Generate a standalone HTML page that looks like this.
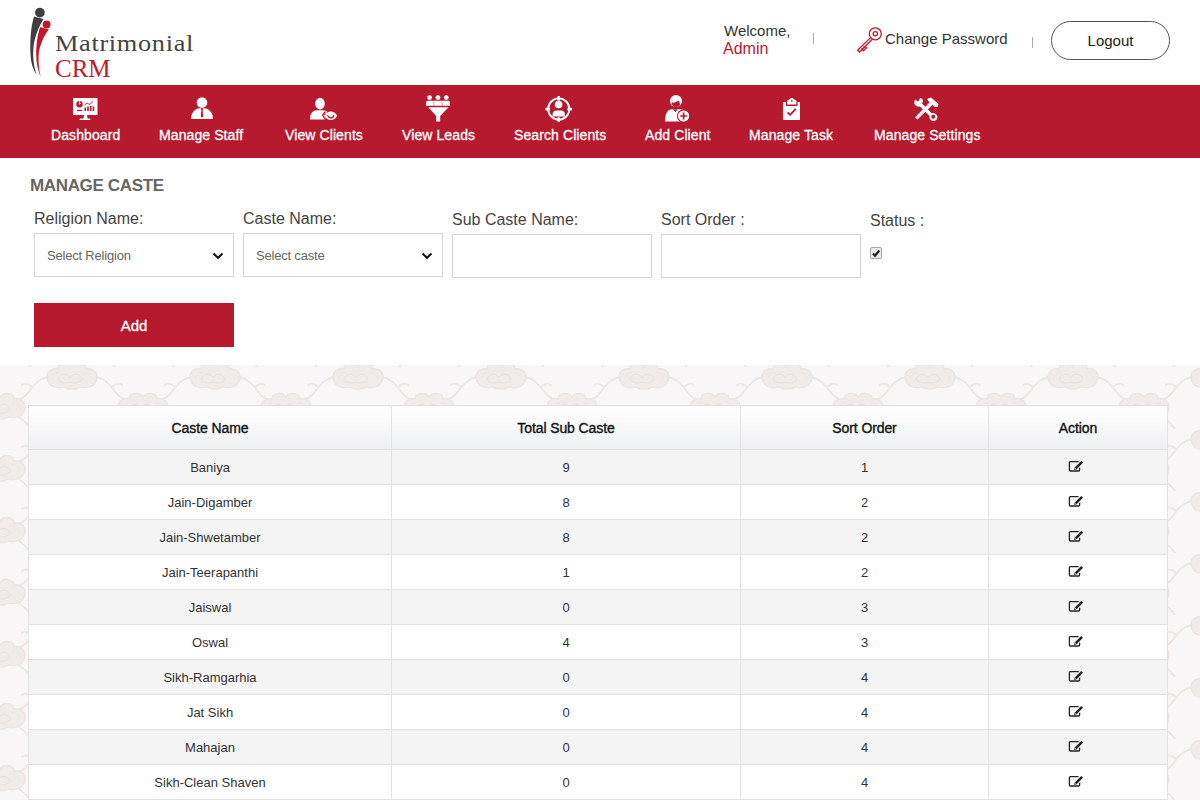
<!DOCTYPE html>
<html><head><meta charset="utf-8">
<style>
*{box-sizing:border-box;margin:0;padding:0}
html,body{width:1200px;height:800px;overflow:hidden;background:#fff;font-family:"Liberation Sans",sans-serif;color:#333}
.abs{position:absolute}
#hdr{position:absolute;left:0;top:0;width:1200px;height:85px;background:#fff}
#nav{position:absolute;left:0;top:85px;width:1200px;height:73px;background:#b71a2e}
.ni{position:absolute;top:0;height:73px;color:#fff;font-size:14px;white-space:nowrap;-webkit-text-stroke:0.3px #fff;letter-spacing:0.1px}
.ni span{position:absolute;top:42px;left:0}
.ni svg{position:absolute}
#form{position:absolute;left:0;top:158px;width:1200px;height:207px;background:#fff}
.lbl{position:absolute;font-size:16px;color:#444;white-space:nowrap}
.box{position:absolute;border:1px solid #d6d6d6;background:#fff}
.sel{position:absolute;left:12px;top:14px;font-size:13px;color:#666;white-space:nowrap;letter-spacing:-0.2px}
.chev{position:absolute;left:177px;top:18px}
#bg{position:absolute;left:0;top:365px;width:1200px;height:435px;background:#f8f6f7;overflow:hidden}
table{position:absolute;left:28px;top:405px;width:1140px;border-collapse:collapse;background:#fff}
td,th{border:1px solid #e3e3e3;text-align:center;font-size:13px;color:#333;height:35px;padding:0}
th{height:44px;font-size:14px;font-weight:normal;color:#111;-webkit-text-stroke:0.35px #111;letter-spacing:-0.1px;background:linear-gradient(#fff,#eff0f2)}
tr.o td{background:#f4f4f4}
td.ed svg{margin-left:79px !important}
</style></head>
<body>
<div id="hdr">
  <svg class="abs" style="left:0;top:0" width="60" height="85" viewBox="0 0 60 85">
    <circle cx="39.9" cy="12.6" r="4.9" fill="#404044"/>
    <path d="M34,16.5 L43.5,19 C37,30 33.5,40 33.2,52 C33,62 35,70 36.8,75 C32,68 30.3,60 30.3,48 C30.3,35 31.5,25 34,16.5 Z" fill="#404044"/>
    <circle cx="46.6" cy="24.5" r="3.9" fill="#c0182c"/>
    <path d="M40.25,27 L48.75,29.5 C44,36 39,46 38.6,56 C38.4,64 39,71 40.8,77 C38,71 36.3,63 36.2,55 C36.2,45 37.5,34 40.25,27 Z" fill="#c0182c"/>
  </svg>
  <div class="abs" style="left:55px;top:30px;font-family:'Liberation Serif',serif;font-size:23.5px;line-height:27px;color:#444;white-space:nowrap;transform-origin:0 0;transform:scaleX(1.12);letter-spacing:0.6px">Matrimonial</div>
  <div class="abs" style="left:55px;top:55px;font-family:'Liberation Serif',serif;font-size:25px;line-height:27px;color:#c0182c;white-space:nowrap;transform-origin:0 0;transform:scaleX(1.0)">CRM</div>

  <div class="abs" style="left:724px;top:22px;font-size:15px;color:#333;white-space:nowrap">Welcome,</div>
  <div class="abs" style="left:723px;top:40px;font-size:16px;color:#b71a2e;white-space:nowrap">Admin</div>
  <div class="abs" style="left:813px;top:33px;width:1px;height:11px;background:#aaa"></div>
  
  <div class="abs" style="left:885px;top:30px;font-size:15px;color:#333;white-space:nowrap">Change Password</div>
  <div class="abs" style="left:1032px;top:37px;width:1px;height:11px;background:#aaa"></div>
  <div class="abs" style="left:1051px;top:21px;width:119px;height:39px;border:1px solid #555;border-radius:20px;font-size:15px;color:#222;text-align:center;line-height:37px">Logout</div>
</div>

<div id="nav">
  <div class="ni" style="left:51px"><span>Dashboard</span></div>
  <div class="ni" style="left:159px"><span>Manage Staff</span></div>
  <div class="ni" style="left:285px"><span>View Clients</span></div>
  <div class="ni" style="left:402px"><span>View Leads</span></div>
  <div class="ni" style="left:514px"><span>Search Clients</span></div>
  <div class="ni" style="left:645px"><span>Add Client</span></div>
  <div class="ni" style="left:749px"><span>Manage Task</span></div>
  <div class="ni" style="left:874px"><span>Manage Settings</span></div>
</div>


<svg class="abs" style="left:0;top:0" width="1200" height="160" viewBox="0 0 1200 160">
 <g fill="#fff">
  <!-- dashboard -->
  <rect x="73" y="98" width="24.5" height="17"/>
  <path d="M84,115 L87,115 L87.5,118.5 L90,118.5 L90.5,120 L79.5,120 L80,118.5 L83.5,118.5 Z"/>
  <!-- staff -->
  <circle cx="202" cy="102.5" r="5.3"/>
  <path d="M191,119 C191,112.5 195.5,108.3 199.5,108.3 L204.5,108.3 C208.5,108.3 213,112.5 213,119 Z"/>
  <!-- view clients -->
  <ellipse cx="320" cy="103.6" rx="4.8" ry="5.8"/>
  <path d="M310,119.5 C309.8,113.5 313,110.3 317,110.3 L323,110.3 C325,110.3 326.5,111 327.5,112 L323.5,114.5 L326,119.5 Z"/>
  <path d="M324,115.8 C326,112.8 328.5,111.5 330.8,111.5 C333.2,111.5 335.5,112.8 337.3,115.8 C335.5,118.8 333.2,120 330.8,120 C328.5,120 326,118.8 324,115.8 Z"/>
  <!-- leads -->
  <circle cx="429.6" cy="97.6" r="2.4"/><circle cx="438" cy="97.6" r="2.4"/><circle cx="446.3" cy="97.6" r="2.4"/>
  <path d="M426,105.8 L426,102.5 C426,101.3 427,100.7 428,100.7 L448,100.7 C449,100.7 450,101.3 450,102.5 L450,105.8 Z"/><path d="M433.8,102 L433.8,105.8 M442.2,102 L442.2,105.8" stroke="#d8737f" stroke-width="0.8"/>
  <path d="M428.3,107.3 L448.5,107.3 L440.2,116 L440.2,121.5 L436.2,121.5 L436.2,116 Z"/>
  <!-- search clients -->
  <circle cx="558.6" cy="104.5" r="3.8"/>
  <path d="M552.6,116.6 L552.6,114 C552.6,111.8 554.3,110.5 556.3,110.5 L561,110.5 C563,110.5 564.8,111.8 564.8,114 L564.8,116.6 Z"/>
  <rect x="557.4" y="96" width="2.6" height="4.8" rx="1"/>
  <rect x="557.4" y="117.3" width="2.6" height="4.8" rx="1"/>
  <rect x="545.3" y="107.8" width="4.8" height="2.6" rx="1"/>
  <rect x="567.3" y="107.8" width="4.8" height="2.6" rx="1"/>
  <!-- add client -->
  <circle cx="676" cy="101" r="6"/>
  <path d="M665,121.5 C665,113 668,109.3 672,109.3 L680.5,109.3 C683,109.3 684.5,110.5 685.5,112 L680,121.5 Z"/>
  <!-- task -->
  <rect x="783" y="102" width="17" height="18" rx="0.8"/>

  <!-- settings -->
  <path d="M927,99 L931,97.5 L938.5,104 L937.5,107 L934.5,106.8 L932.5,104.8 L917.5,119.5 L915,117.5 L929.5,102.5 Z"/>
  <path d="M915.5,99.5 L917.5,101.5 L919.2,100.2 L920,98 L922.5,99 L923,101.5 L922,103.5 L931.5,113 C933.5,112.5 936.5,113.5 937.3,116 C938,119 935.5,121 933.5,121 C931,121 929,118.7 929.5,116 L920,106.5 C917.5,107 915.5,106 914.5,104 C914,102.5 914.3,100.8 915.5,99.5 Z"/>
 </g>
 <g fill="#b71a2e" stroke="none">
  <!-- dashboard inner -->
  <circle cx="79.5" cy="104.3" r="3.2"/>
  <rect x="77" y="109.8" width="5" height="1.3"/>
  <rect x="84.5" y="107.5" width="1.6" height="3.6"/><rect x="87.2" y="106.5" width="1.6" height="4.6"/><rect x="89.9" y="106" width="1.6" height="5.1"/><rect x="92.6" y="106.5" width="1.6" height="4.6"/>
  <!-- staff tie -->
  <path d="M201,108.3 L203,108.3 L203.2,109.5 L202.6,110 L203.3,116.5 L202,117.6 L200.7,116.5 L201.4,110 L200.8,109.5 Z"/>
  <!-- add client face -->
  <path d="M671.8,102.3 C673.5,103.2 676.5,102.3 678.3,100.6 C679.3,101.8 679.9,103 680,104.2 C679.8,105.9 678,107 676,107 C673.8,107 672,105.8 671.8,103.8 Z"/>
  <path d="M672.5,109.3 L677.8,109.3 L675.5,112 Z"/>
  <!-- task dot -->
  <circle cx="791.6" cy="100.7" r="0.9"/>
  <!-- settings wrench ring hole -->
  <circle cx="933.3" cy="116.8" r="2"/>
 </g>
 <g fill="none" stroke="#b71a2e">
  <path d="M81,103 L79.5,104.3 L79.5,101" stroke-width="0.8" stroke="#fff"/>
  <path d="M84.5,105 L87,103 L89.5,104.5 L93,101.5" stroke-width="0.9"/>
  <path d="M325.5,111.5 L322.5,115 L326,120.5" stroke-width="1.2"/>
  <path d="M327.5,115.2 C328.5,117.3 329.8,118 330.8,118 C331.8,118 333.2,117.3 334,115.2" stroke-width="1.3"/>
  
  <path d="M917.5,118 L924,111.5" stroke-width="0.6" stroke-dasharray="1 1"/>
 </g>
 <circle cx="558.75" cy="109" r="10.6" fill="none" stroke="#fff" stroke-width="1.9"/>
 <path d="M786,106 L786,100.6 C786,99.4 787,99 788.4,98.8 C789.4,97.4 790.6,96.8 791.8,96.8 C793,96.8 794.2,97.4 795.2,98.8 C796.6,99 797.6,99.4 797.6,100.6 L797.6,106 Z" fill="#b71a2e"/>
 <path d="M787.2,104.4 L787.2,101 C787.2,100.2 788,100 789,99.8 C790,98.6 790.9,98 791.8,98 C792.7,98 793.6,98.6 794.6,99.8 C795.6,100 796.4,100.2 796.4,101 L796.4,104.4 Z" fill="#fff"/>
 <circle cx="791.8" cy="100.8" r="0.9" fill="#b71a2e"/>
 <path d="M787.6,112.3 L790.2,114.8 L795.8,108.8" stroke="#b71a2e" stroke-width="1.8" fill="none"/>
 <circle cx="683.6" cy="116" r="6.7" fill="#b71a2e"/>
 <circle cx="683.6" cy="116" r="5.6" fill="#fff"/>
 <path d="M680.2,116 L687,116 M683.6,112.6 L683.6,119.4" stroke="#b71a2e" stroke-width="1.7" fill="none"/>
 <!-- key -->
 <g fill="none" stroke="#c0182c" stroke-width="1.3">
  <circle cx="875.3" cy="33.8" r="6"/>
  <circle cx="875.3" cy="33.8" r="2.1"/>
  <path d="M870.6,37.6 L857.6,50.3 L859.6,52 L872.3,39.3"/>
  <path d="M861.3,48.5 L863.6,50.8 L865,49.3 M863.6,46.3 L865.8,48.6 L867.2,47.2"/>
 </g>
</svg>

<div id="form">
  <div class="abs" style="left:30px;top:18px;font-size:17px;font-weight:bold;color:#666;white-space:nowrap;letter-spacing:-0.35px">MANAGE CASTE</div>
  <div class="lbl" style="left:34px;top:52px">Religion Name:</div>
  <div class="lbl" style="left:243px;top:52px">Caste Name:</div>
  <div class="lbl" style="left:452px;top:53px">Sub Caste Name:</div>
  <div class="lbl" style="left:661px;top:53px">Sort Order :</div>
  <div class="lbl" style="left:870px;top:54px">Status :</div>
  <div class="box" style="left:34px;top:75px;width:200px;height:44px"><span class="sel">Select Religion</span><svg class="chev" width="12" height="8" viewBox="0 0 12 8"><path d="M1.5,1.5 L6,5.8 L10.5,1.5" fill="none" stroke="#111" stroke-width="2"/></svg></div>
  <div class="box" style="left:243px;top:75px;width:200px;height:44px"><span class="sel">Select caste</span><svg class="chev" width="12" height="8" viewBox="0 0 12 8"><path d="M1.5,1.5 L6,5.8 L10.5,1.5" fill="none" stroke="#111" stroke-width="2"/></svg></div>
  <div class="box" style="left:452px;top:76px;width:200px;height:44px"></div>
  <div class="box" style="left:661px;top:76px;width:200px;height:44px"></div>
  <div class="abs" style="left:870px;top:89px;width:12px;height:12px;border:1px solid #aaa;border-radius:2px;background:#e9e9e9"></div>
  <svg class="abs" style="left:870px;top:89px" width="12" height="12" viewBox="0 0 12 12"><path d="M3,6.5 L5,8.8 L9.3,3.5" fill="none" stroke="#222" stroke-width="2.2"/></svg>
  <div class="abs" style="left:34px;top:145px;width:200px;height:44px;background:#b71a2e;color:#fff;font-size:15px;text-align:center;line-height:46px;-webkit-text-stroke:0.3px #fff">Add</div>
</div>

<div id="bg"><svg width="1200" height="435" style="display:block">
 <defs><pattern id="dm" x="0" y="2" width="143" height="62" patternUnits="userSpaceOnUse">
  <g fill="none" stroke="#eee8e5" stroke-width="1.8" stroke-linecap="round">
   <path d="M96,10 C108,12 112,22 118,28 C124,34 130,34 140,30"/>
   <path d="M48,10 C36,12 32,22 26,28 C20,34 14,34 4,30"/>
   <path d="M96,74 C108,72 112,62 118,56 C124,50 130,48 140,32"/>
   <path d="M48,74 C36,72 32,62 26,56 C20,50 14,48 4,32"/>
   <path d="M112,20 C116,16 120,16 122,18 M32,20 C28,16 24,16 22,18"/>
  </g>
  <g transform="translate(72,10)">
   <path d="M-24,4 C-28,-4 -20,-10 -14,-8 C-14,-14 -4,-16 0,-10 C4,-16 14,-14 14,-8 C20,-10 28,-4 24,4 C22,10 14,12 8,10 C4,13 -4,13 -8,10 C-14,12 -22,10 -24,4 Z" fill="#f1ebe9" stroke="#ebe4e1" stroke-width="1.2"/>
   <path d="M-14,2 C-12,-4 -4,-4 -2,1 C0,-4 8,-4 10,2 C8,6 2,7 -2,5 C-6,7 -12,6 -14,2 Z" fill="none" stroke="#e9e2df" stroke-width="1"/>
   <path d="M-20,2 C-18,-3 -16,-5 -12,-4 M12,-4 C16,-5 18,-3 20,2" fill="none" stroke="#ebe4e1" stroke-width="0.8"/>
  </g><g transform="translate(72,72)">
   <path d="M-24,4 C-28,-4 -20,-10 -14,-8 C-14,-14 -4,-16 0,-10 C4,-16 14,-14 14,-8 C20,-10 28,-4 24,4 C22,10 14,12 8,10 C4,13 -4,13 -8,10 C-14,12 -22,10 -24,4 Z" fill="#f1ebe9" stroke="#ebe4e1" stroke-width="1.2"/>
   <path d="M-14,2 C-12,-4 -4,-4 -2,1 C0,-4 8,-4 10,2 C8,6 2,7 -2,5 C-6,7 -12,6 -14,2 Z" fill="none" stroke="#e9e2df" stroke-width="1"/>
   <path d="M-20,2 C-18,-3 -16,-5 -12,-4 M12,-4 C16,-5 18,-3 20,2" fill="none" stroke="#ebe4e1" stroke-width="0.8"/>
  </g><g transform="translate(0,40)">
   <path d="M-24,4 C-28,-4 -20,-10 -14,-8 C-14,-14 -4,-16 0,-10 C4,-16 14,-14 14,-8 C20,-10 28,-4 24,4 C22,10 14,12 8,10 C4,13 -4,13 -8,10 C-14,12 -22,10 -24,4 Z" fill="#f1ebe9" stroke="#ebe4e1" stroke-width="1.2"/>
   <path d="M-14,2 C-12,-4 -4,-4 -2,1 C0,-4 8,-4 10,2 C8,6 2,7 -2,5 C-6,7 -12,6 -14,2 Z" fill="none" stroke="#e9e2df" stroke-width="1"/>
   <path d="M-20,2 C-18,-3 -16,-5 -12,-4 M12,-4 C16,-5 18,-3 20,2" fill="none" stroke="#ebe4e1" stroke-width="0.8"/>
  </g><g transform="translate(143,40)">
   <path d="M-24,4 C-28,-4 -20,-10 -14,-8 C-14,-14 -4,-16 0,-10 C4,-16 14,-14 14,-8 C20,-10 28,-4 24,4 C22,10 14,12 8,10 C4,13 -4,13 -8,10 C-14,12 -22,10 -24,4 Z" fill="#f1ebe9" stroke="#ebe4e1" stroke-width="1.2"/>
   <path d="M-14,2 C-12,-4 -4,-4 -2,1 C0,-4 8,-4 10,2 C8,6 2,7 -2,5 C-6,7 -12,6 -14,2 Z" fill="none" stroke="#e9e2df" stroke-width="1"/>
   <path d="M-20,2 C-18,-3 -16,-5 -12,-4 M12,-4 C16,-5 18,-3 20,2" fill="none" stroke="#ebe4e1" stroke-width="0.8"/>
  </g><g transform="translate(72,-52)">
   <path d="M-24,4 C-28,-4 -20,-10 -14,-8 C-14,-14 -4,-16 0,-10 C4,-16 14,-14 14,-8 C20,-10 28,-4 24,4 C22,10 14,12 8,10 C4,13 -4,13 -8,10 C-14,12 -22,10 -24,4 Z" fill="#f1ebe9" stroke="#ebe4e1" stroke-width="1.2"/>
   <path d="M-14,2 C-12,-4 -4,-4 -2,1 C0,-4 8,-4 10,2 C8,6 2,7 -2,5 C-6,7 -12,6 -14,2 Z" fill="none" stroke="#e9e2df" stroke-width="1"/>
   <path d="M-20,2 C-18,-3 -16,-5 -12,-4 M12,-4 C16,-5 18,-3 20,2" fill="none" stroke="#ebe4e1" stroke-width="0.8"/>
  </g>
 </pattern></defs>
 <rect width="1200" height="435" fill="#f8f6f7"/>
 <rect width="1200" height="435" fill="url(#dm)"/>
</svg></div>
<table>
<tr><th style="width:363px">Caste Name</th><th style="width:349px">Total Sub Caste</th><th style="width:248px">Sort Order</th><th>Action</th></tr>
<tr class="o"><td>Baniya</td><td>9</td><td>1</td><td class="ed"><svg width="16" height="14" viewBox="0 1 16 14" style="display:block"><path d="M10.6,2.6 L2.4,2.6 C1.7,2.6 1.4,3 1.4,3.7 L1.4,11 C1.4,11.7 1.7,12 2.4,12 L10.6,12 C11.3,12 11.6,11.7 11.6,11 L11.6,8.8" fill="none" stroke="#222" stroke-width="1.3"/><path d="M6,11 L6.8,8.4 L13.2,2 L15,3.8 L8.6,10.2 Z" fill="#222"/><path d="M7,8.9 L8.2,10" stroke="#fff" stroke-width="0.6"/></svg></td></tr>
<tr><td>Jain-Digamber</td><td>8</td><td>2</td><td class="ed"><svg width="16" height="14" viewBox="0 1 16 14" style="display:block"><path d="M10.6,2.6 L2.4,2.6 C1.7,2.6 1.4,3 1.4,3.7 L1.4,11 C1.4,11.7 1.7,12 2.4,12 L10.6,12 C11.3,12 11.6,11.7 11.6,11 L11.6,8.8" fill="none" stroke="#222" stroke-width="1.3"/><path d="M6,11 L6.8,8.4 L13.2,2 L15,3.8 L8.6,10.2 Z" fill="#222"/><path d="M7,8.9 L8.2,10" stroke="#fff" stroke-width="0.6"/></svg></td></tr>
<tr class="o"><td>Jain-Shwetamber</td><td>8</td><td>2</td><td class="ed"><svg width="16" height="14" viewBox="0 1 16 14" style="display:block"><path d="M10.6,2.6 L2.4,2.6 C1.7,2.6 1.4,3 1.4,3.7 L1.4,11 C1.4,11.7 1.7,12 2.4,12 L10.6,12 C11.3,12 11.6,11.7 11.6,11 L11.6,8.8" fill="none" stroke="#222" stroke-width="1.3"/><path d="M6,11 L6.8,8.4 L13.2,2 L15,3.8 L8.6,10.2 Z" fill="#222"/><path d="M7,8.9 L8.2,10" stroke="#fff" stroke-width="0.6"/></svg></td></tr>
<tr><td>Jain-Teerapanthi</td><td>1</td><td>2</td><td class="ed"><svg width="16" height="14" viewBox="0 1 16 14" style="display:block"><path d="M10.6,2.6 L2.4,2.6 C1.7,2.6 1.4,3 1.4,3.7 L1.4,11 C1.4,11.7 1.7,12 2.4,12 L10.6,12 C11.3,12 11.6,11.7 11.6,11 L11.6,8.8" fill="none" stroke="#222" stroke-width="1.3"/><path d="M6,11 L6.8,8.4 L13.2,2 L15,3.8 L8.6,10.2 Z" fill="#222"/><path d="M7,8.9 L8.2,10" stroke="#fff" stroke-width="0.6"/></svg></td></tr>
<tr class="o"><td>Jaiswal</td><td>0</td><td>3</td><td class="ed"><svg width="16" height="14" viewBox="0 1 16 14" style="display:block"><path d="M10.6,2.6 L2.4,2.6 C1.7,2.6 1.4,3 1.4,3.7 L1.4,11 C1.4,11.7 1.7,12 2.4,12 L10.6,12 C11.3,12 11.6,11.7 11.6,11 L11.6,8.8" fill="none" stroke="#222" stroke-width="1.3"/><path d="M6,11 L6.8,8.4 L13.2,2 L15,3.8 L8.6,10.2 Z" fill="#222"/><path d="M7,8.9 L8.2,10" stroke="#fff" stroke-width="0.6"/></svg></td></tr>
<tr><td>Oswal</td><td>4</td><td>3</td><td class="ed"><svg width="16" height="14" viewBox="0 1 16 14" style="display:block"><path d="M10.6,2.6 L2.4,2.6 C1.7,2.6 1.4,3 1.4,3.7 L1.4,11 C1.4,11.7 1.7,12 2.4,12 L10.6,12 C11.3,12 11.6,11.7 11.6,11 L11.6,8.8" fill="none" stroke="#222" stroke-width="1.3"/><path d="M6,11 L6.8,8.4 L13.2,2 L15,3.8 L8.6,10.2 Z" fill="#222"/><path d="M7,8.9 L8.2,10" stroke="#fff" stroke-width="0.6"/></svg></td></tr>
<tr class="o"><td>Sikh-Ramgarhia</td><td>0</td><td>4</td><td class="ed"><svg width="16" height="14" viewBox="0 1 16 14" style="display:block"><path d="M10.6,2.6 L2.4,2.6 C1.7,2.6 1.4,3 1.4,3.7 L1.4,11 C1.4,11.7 1.7,12 2.4,12 L10.6,12 C11.3,12 11.6,11.7 11.6,11 L11.6,8.8" fill="none" stroke="#222" stroke-width="1.3"/><path d="M6,11 L6.8,8.4 L13.2,2 L15,3.8 L8.6,10.2 Z" fill="#222"/><path d="M7,8.9 L8.2,10" stroke="#fff" stroke-width="0.6"/></svg></td></tr>
<tr><td>Jat Sikh</td><td>0</td><td>4</td><td class="ed"><svg width="16" height="14" viewBox="0 1 16 14" style="display:block"><path d="M10.6,2.6 L2.4,2.6 C1.7,2.6 1.4,3 1.4,3.7 L1.4,11 C1.4,11.7 1.7,12 2.4,12 L10.6,12 C11.3,12 11.6,11.7 11.6,11 L11.6,8.8" fill="none" stroke="#222" stroke-width="1.3"/><path d="M6,11 L6.8,8.4 L13.2,2 L15,3.8 L8.6,10.2 Z" fill="#222"/><path d="M7,8.9 L8.2,10" stroke="#fff" stroke-width="0.6"/></svg></td></tr>
<tr class="o"><td>Mahajan</td><td>0</td><td>4</td><td class="ed"><svg width="16" height="14" viewBox="0 1 16 14" style="display:block"><path d="M10.6,2.6 L2.4,2.6 C1.7,2.6 1.4,3 1.4,3.7 L1.4,11 C1.4,11.7 1.7,12 2.4,12 L10.6,12 C11.3,12 11.6,11.7 11.6,11 L11.6,8.8" fill="none" stroke="#222" stroke-width="1.3"/><path d="M6,11 L6.8,8.4 L13.2,2 L15,3.8 L8.6,10.2 Z" fill="#222"/><path d="M7,8.9 L8.2,10" stroke="#fff" stroke-width="0.6"/></svg></td></tr>
<tr><td>Sikh-Clean Shaven</td><td>0</td><td>4</td><td class="ed"><svg width="16" height="14" viewBox="0 1 16 14" style="display:block"><path d="M10.6,2.6 L2.4,2.6 C1.7,2.6 1.4,3 1.4,3.7 L1.4,11 C1.4,11.7 1.7,12 2.4,12 L10.6,12 C11.3,12 11.6,11.7 11.6,11 L11.6,8.8" fill="none" stroke="#222" stroke-width="1.3"/><path d="M6,11 L6.8,8.4 L13.2,2 L15,3.8 L8.6,10.2 Z" fill="#222"/><path d="M7,8.9 L8.2,10" stroke="#fff" stroke-width="0.6"/></svg></td></tr>
</table>
</body></html>
